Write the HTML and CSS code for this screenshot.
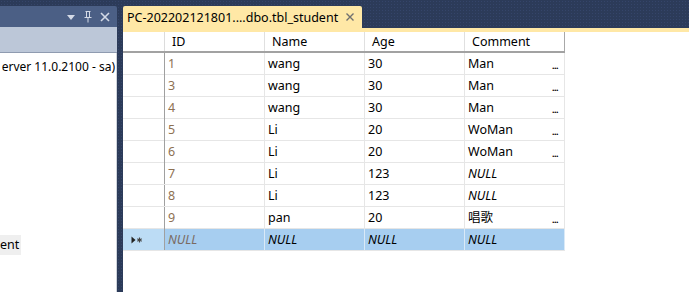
FILE: index.html
```html
<!DOCTYPE html>
<html>
<head>
<meta charset="utf-8">
<link rel="stylesheet" href="styles.css">
</head>
<body>
<div class="app">
  <div class="panel">
    <div class="panel-title">
      <svg class="ico" width="12" height="12" viewBox="0 0 12 12"><path d="M2 4h8l-4 5z" fill="#d4dae6"/></svg>
      <svg class="ico" width="12" height="14" viewBox="0 0 12 14"><path d="M3.5 1.5h5M4.5 1.5v6M7.5 1.5v6M2.5 7.5h7M6 7.5v5" stroke="#d4dae6" stroke-width="1" fill="none"/><path d="M7 2v5.5h1V2z" fill="#d4dae6"/></svg>
      <svg class="ico" width="12" height="12" viewBox="0 0 12 12"><path d="M2 2l8 8M10 2l-8 8" stroke="#d4dae6" stroke-width="1.6"/></svg>
    </div>
    <div class="panel-toolbar"></div>
    <div class="panel-body">
      <div class="tree-line"><span>erver 11.0.2100 - sa)</span></div>
      <div class="spacer"></div>
      <div class="tree-line sel-line"><span class="sel">ent</span></div>
    </div>
  </div>
  <div class="doc">
    <div class="tabs">
      <div class="tab">
        <span class="tab-text">PC-202202121801....dbo.tbl_student</span>
        <svg class="tab-close" width="10" height="10" viewBox="0 0 10 10"><path d="M1.5 1.5l7 7M8.5 1.5l-7 7" stroke="#707070" stroke-width="1.4"/></svg>
      </div>
    </div>
    <div class="tab-strip"></div>
    <div class="content">
      <div class="grid">
        <div class="row head">
          <div class="rh"></div>
          <div class="c">ID</div>
          <div class="c">Name</div>
          <div class="c">Age</div>
          <div class="c last">Comment</div>
        </div>
        <div class="row"><div class="rh"></div><div class="c id">1</div><div class="c">wang</div><div class="c">30</div><div class="c last">Man<span class="dots">...</span></div></div>
        <div class="row"><div class="rh"></div><div class="c id">3</div><div class="c">wang</div><div class="c">30</div><div class="c last">Man<span class="dots">...</span></div></div>
        <div class="row"><div class="rh"></div><div class="c id">4</div><div class="c">wang</div><div class="c">30</div><div class="c last">Man<span class="dots">...</span></div></div>
        <div class="row"><div class="rh"></div><div class="c id">5</div><div class="c">Li</div><div class="c">20</div><div class="c last">WoMan<span class="dots">...</span></div></div>
        <div class="row"><div class="rh"></div><div class="c id">6</div><div class="c">Li</div><div class="c">20</div><div class="c last">WoMan<span class="dots">...</span></div></div>
        <div class="row"><div class="rh"></div><div class="c id">7</div><div class="c">Li</div><div class="c">123</div><div class="c last null">NULL</div></div>
        <div class="row"><div class="rh"></div><div class="c id">8</div><div class="c">Li</div><div class="c">123</div><div class="c last null">NULL</div></div>
        <div class="row"><div class="rh"></div><div class="c id">9</div><div class="c">pan</div><div class="c">20</div><div class="c last">唱歌<span class="dots">...</span></div></div>
        <div class="row newrow">
          <div class="rh"><svg width="12" height="8" viewBox="0 0 12 8"><path d="M0.5 0.5v7l4-3.5z" fill="#222"/><path d="M8.5 1.5v5M6.3 2.7l4.4 2.6M10.7 2.7l-4.4 2.6" stroke="#444" stroke-width="1.1"/></svg></div>
          <div class="c id null">NULL</div><div class="c null">NULL</div><div class="c null">NULL</div><div class="c last null">NULL</div>
        </div>
      </div>
    </div>
  </div>
</div>
</body>
</html>
```
FILE: styles.css
```css
html, body {
  margin: 0;
  padding: 0;
  height: 100%;
}
body {
  background-color: #2c3b59;
  background-image: radial-gradient(#35456a 0.6px, transparent 0.8px);
  background-size: 3px 3px;
  font-family: "Noto Sans", "Noto Sans CJK SC", sans-serif;
  font-size: 12px;
  color: #000;
  overflow: hidden;
}
.app {
  display: flex;
  height: 292px;
  gap: 6px;
}
.panel {
  width: 117px;
  padding-top: 6px;
  display: flex;
  flex-direction: column;
}
.panel-title {
  height: 21px;
  background: #4b5f85;
  border-top-right-radius: 2px;
  display: flex;
  align-items: center;
  justify-content: flex-end;
  gap: 5px;
  padding-right: 6px;
}
.ico { display: block; }
.panel-toolbar {
  height: 25px;
  background: #bcc7d8;
  border-bottom: 1px solid #8f9bb0;
}
.panel-body {
  flex: 1;
  background: #fff;
  border-right: 1px solid #cfd4dc;
  display: flex;
  flex-direction: column;
  padding-top: 5px;
}
.tree-line {
  display: flex;
  justify-content: flex-end;
  white-space: nowrap;
  height: 17px;
  line-height: 17px;
  font-size: 12px;
  padding-right: 1px;
}
.spacer { height: 160px; }
.sel-line { justify-content: flex-start; height: 20px; line-height: 20px; font-size: 12.5px; }
.sel {
  background: #efefef;
  padding-right: 2px;
}
.doc {
  flex: 1;
  padding-top: 6px;
  display: flex;
  flex-direction: column;
}
.tabs {
  height: 22px;
  display: flex;
}
.tab {
  width: 239px;
  background: #ffe8a6;
  border-radius: 2px 2px 0 0;
  display: flex;
  align-items: center;
  padding-left: 4px;
  box-sizing: border-box;
}
.tab-text {
  font-size: 12.5px;
  white-space: nowrap;
}
.tab-close { margin-left: auto; margin-right: 7px; }
.tab-strip {
  height: 4px;
  background: #ffe8a6;
}
.content {
  flex: 1;
  background: #fff;
}
.grid {
  width: 442px;
}
.row {
  display: grid;
  grid-template-columns: 42px 100px 100px 100px 100px;
  height: 22px;
  box-sizing: border-box;
  border-bottom: 1px solid #e6e6e6;
}
.row.head {
  height: 21px;
  border-bottom: 2px solid #a2a2a2;
}
.rh {
  border-right: 1px solid #a0a0a0;
  box-sizing: border-box;
  display: flex;
  align-items: center;
  padding-left: 8px;
}
.head .rh { border-right-color: #dcdcdc; }
.c {
  border-right: 1px solid #e6e6e6;
  box-sizing: border-box;
  padding-left: 3px;
  padding-top: 1px;
  line-height: 20px;
  white-space: nowrap;
  display: flex;
  font-size: 12.5px;
}
.head .c {
  padding-left: 7px;
  padding-top: 1px;
  line-height: 18px;
  border-right-color: #e0e0e0;
}
.head .c.last { border-right-color: #a8a8a8; }
.c.last { border-right-color: #e6e6e6; }
.id { color: #8e7152; }
.null { font-style: italic; }
.dots {
  margin-left: auto;
  margin-right: 6px;
  font-size: 9px;
  font-weight: bold;
  letter-spacing: -0.5px;
  line-height: 23px;
}
.newrow { border-bottom-color: #e6e6e6; }
.newrow .rh { background: #bcdcf5; }
.newrow .c { background: #a7cef0; border-right-color: #d9e9f7; }
.newrow .c.id { color: #7a6a62; }
```
